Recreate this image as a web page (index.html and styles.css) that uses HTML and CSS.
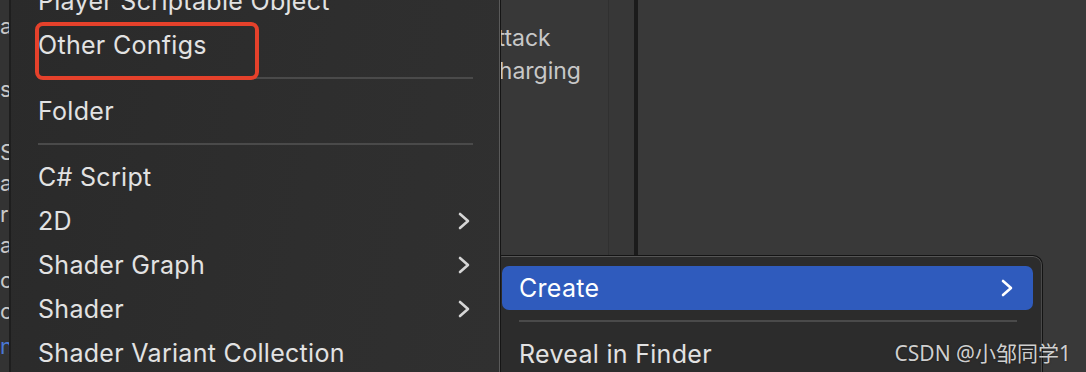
FILE: index.html
```html
<!DOCTYPE html>
<html lang="en">
<head>
<meta charset="utf-8">
<title>Create menu</title>
<link rel="stylesheet" href="styles.css">
</head>
<body>
<div class="app">
  <div class="side">
    <div class="side-line l1">a</div>
    <div class="side-line l2">st</div>
    <div class="side-line l3">S</div>
    <div class="side-line l4">a</div>
    <div class="side-line l5">r</div>
    <div class="side-line l6">al</div>
    <div class="side-line l7">c</div>
    <div class="side-line l8">c</div>
    <div class="side-line l9 link">n</div>
  </div>
  <div class="side-divider"></div>
  <div class="panel">
    <div class="labels">
      <div class="label">Attack</div>
      <div class="label">Charging</div>
    </div>
  </div>
  <div class="panel-line"></div>
  <div class="narrow"></div>
  <div class="dark-divider"></div>
  <div class="right"></div>
</div>

<div class="menu context">
  <div class="item active"><span>Create</span>
    <svg class="chev" viewBox="0 0 12 18" width="12" height="18"><polyline points="2,2 10,9 2,16" fill="none" stroke="#ffffff" stroke-width="2.6" stroke-linecap="round" stroke-linejoin="round"/></svg>
  </div>
  <div class="sep"></div>
  <div class="item"><span>Reveal in Finder</span></div>
</div>

<div class="menu submenu">
  <div class="item"><span>Player Scriptable Object</span></div>
  <div class="item"><span>Other Configs</span></div>
  <div class="sep"></div>
  <div class="item"><span>Folder</span></div>
  <div class="sep"></div>
  <div class="item"><span>C# Script</span></div>
  <div class="item"><span>2D</span>
    <svg class="chev" viewBox="0 0 12 18" width="12" height="18"><polyline points="2,2 10,9 2,16" fill="none" stroke="#d6d6d6" stroke-width="2.6" stroke-linecap="round" stroke-linejoin="round"/></svg>
  </div>
  <div class="item"><span>Shader Graph</span>
    <svg class="chev" viewBox="0 0 12 18" width="12" height="18"><polyline points="2,2 10,9 2,16" fill="none" stroke="#d6d6d6" stroke-width="2.6" stroke-linecap="round" stroke-linejoin="round"/></svg>
  </div>
  <div class="item"><span>Shader</span>
    <svg class="chev" viewBox="0 0 12 18" width="12" height="18"><polyline points="2,2 10,9 2,16" fill="none" stroke="#d6d6d6" stroke-width="2.6" stroke-linecap="round" stroke-linejoin="round"/></svg>
  </div>
  <div class="item"><span>Shader Variant Collection</span></div>
</div>

<div class="highlight-box"></div>
<div class="watermark">CSDN @小邹同学1</div>
</body>
</html>
```

FILE: styles.css
```css
* { box-sizing: border-box; }
html, body {
  margin: 0;
  padding: 0;
  width: 1086px;
  height: 372px;
  overflow: hidden;
  background: #383838;
  font-family: Inter, "Noto Sans", "Noto Sans CJK SC", sans-serif;
  position: relative;
}
.app {
  display: flex;
  height: 372px;
}
.side {
  width: 9px;
  flex: none;
  overflow: hidden;
  background: #333333;
  color: #c8c8c8;
  font-size: 22px;
  padding-top: 11px;
}
.side-line { height: 31px; line-height: 31px; white-space: nowrap; }
.side-line.l2 { margin-top: 32px; }
.side-line.l3 { margin-top: 32px; }
.side-line.l7 { margin-top: 4px; }
.side-line.l9 { margin-top: 4px; }
.link { color: #4a78d6; }
.side-divider { width: 2px; flex: none; background: #1e1e1e; }
.panel {
  width: 597px;
  flex: none;
  background: #383838;
  color: #c8c8c8;
  font-size: 23px;
}
.labels { padding: 22px 0 0 471px; }
.label { height: 33px; line-height: 33px; white-space: nowrap; }
.panel-line { width: 1px; flex: none; background: #303030; height: 256px; }
.narrow { width: 25px; flex: none; background: #373737; height: 256px; }
.dark-divider { width: 4px; flex: none; background: #1b1b1b; height: 256px; }
.right { flex: 1; background: #393939; }

.menu {
  position: absolute;
  color: #e2e2e2;
  font-size: 25px;
  letter-spacing: 0.3px;
  overflow: hidden;
}
.item {
  height: 44px;
  display: flex;
  align-items: center;
  justify-content: space-between;
  white-space: nowrap;
}
.sep {
  height: 22px;
  padding-top: 10px;
}
.sep::before {
  content: "";
  display: block;
  height: 2px;
  background: #4a4a4a;
}
.submenu {
  left: 11px;
  top: -21px;
  width: 489px;
  height: 393px;
  background: linear-gradient(100deg, #2a2a2a 0%, #2e2e2e 60%, #303030 100%);
  border-right: 1px solid #5a5a5a;
  box-shadow: 1px 0 0 #151515;
}
.submenu .item { padding: 0 29px 0 27px; }
.submenu .sep { margin: 0 26px 0 27px; }

.context {
  left: 492px;
  top: 255px;
  width: 551px;
  height: 117px;
  background: #2c2c2c;
  border: 1px solid #141414;
  border-bottom: none;
  border-radius: 10px 10px 0 0;
  box-shadow: inset 0 1px 0 #555555, inset -1px 0 0 #4a4a4a;
  padding: 10px 9px 0 9px;
}
.context .item { padding: 0 20px 0 17px; }
.context .sep { margin: 0 16px 0 17px; }
.item.active {
  background: #2f5bbd;
  color: #ffffff;
  border-radius: 7px;
}
.chev { display: block; flex: none; }

.highlight-box {
  position: absolute;
  left: 35px;
  top: 22px;
  width: 224px;
  height: 58px;
  border: 4px solid #e5412b;
  border-radius: 8px;
}
.watermark {
  position: absolute;
  right: 15px;
  top: 338px;
  font-size: 21px;
  line-height: 30px;
  color: #cfcfcf;
  font-family: "Noto Sans", "Noto Sans CJK SC", sans-serif;
  text-shadow: 0 0 2px rgba(0,0,0,0.5);
  white-space: nowrap;
}
```
